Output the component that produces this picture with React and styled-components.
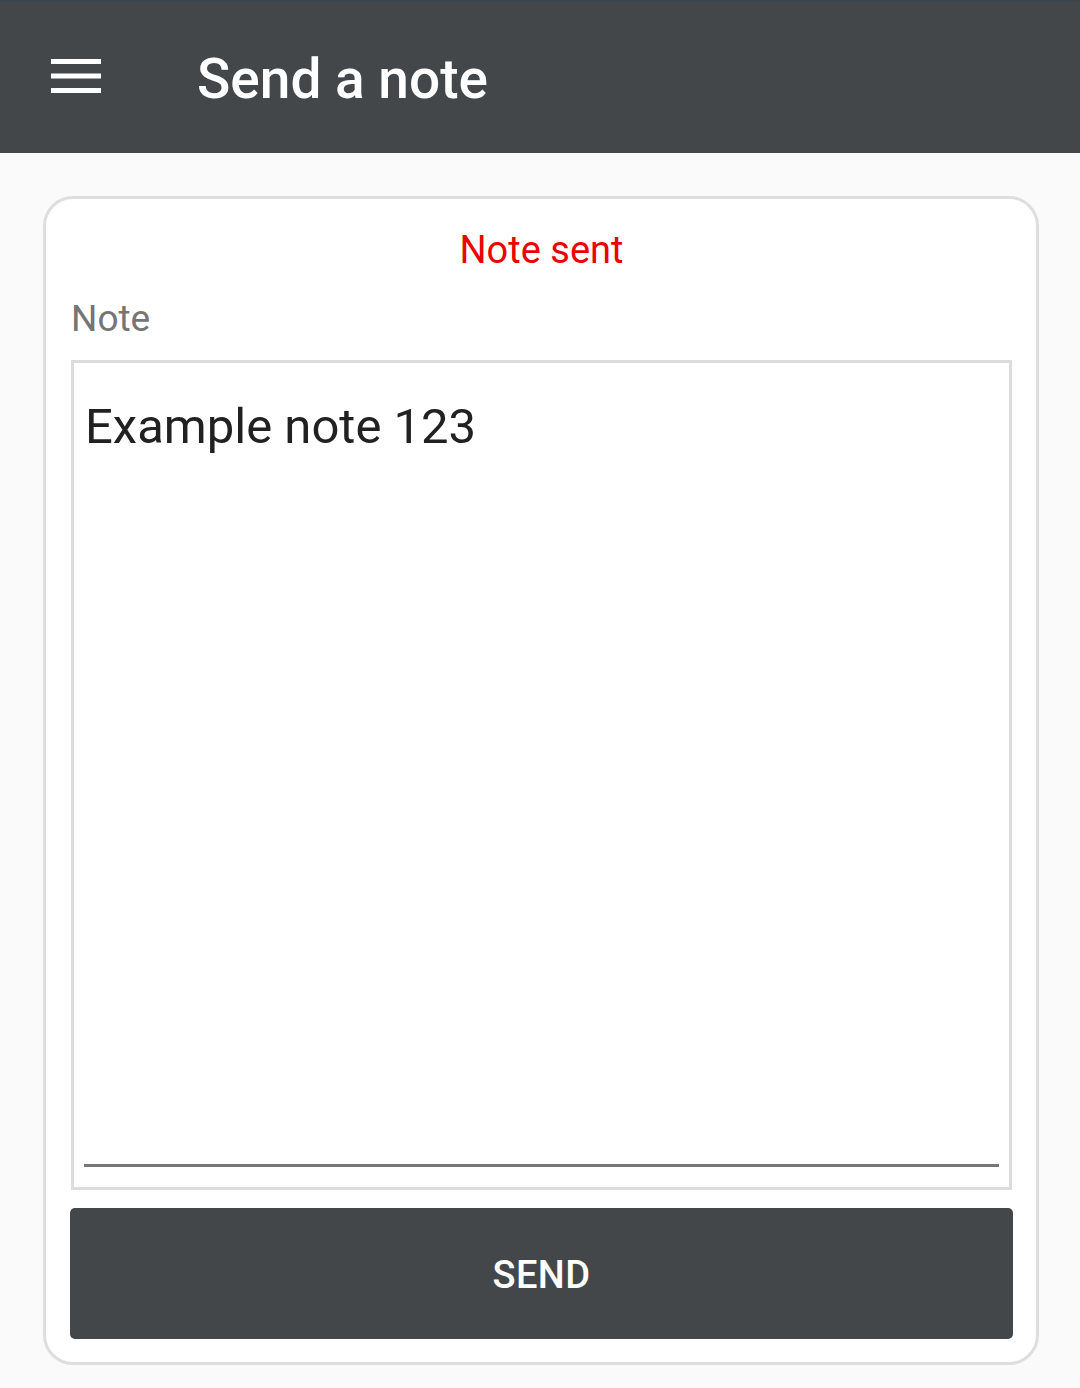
import styled, { createGlobalStyle } from 'styled-components'

const GlobalStyle = createGlobalStyle`
  html, body {
    margin: 0;
    padding: 0;
    background: #fafafa;
    font-family: Roboto, "Liberation Sans", Arial, sans-serif;
  }
  * { box-sizing: border-box; }
`

const TopBar = styled.header`
  height: 153px;
  background: #44474a;
  border-top: 2px solid #3a4550;
  display: flex;
  align-items: center;
  padding-left: 51px;
`

const MenuButton = styled.button`
  width: 50px;
  height: 34px;
  padding: 0;
  border: none;
  background: none;
  margin-top: -4px;
  display: flex;
`

const Title = styled.h1`
  margin: 0 0 0 96px;
  padding-top: 3px;
  color: #ffffff;
  font-size: 55px;
  font-weight: 500;
  line-height: normal;
`

const Main = styled.main`
  padding: 43px 41px 24px 43px;
`

const Card = styled.section`
  background: #ffffff;
  border: 3px solid #dedede;
  border-radius: 30px;
  padding: 29px 24px 23px 25px;
  display: flex;
  flex-direction: column;
`

const Status = styled.div`
  color: #ee0000;
  font-size: 38px;
  text-align: center;
  line-height: normal;
`

const Label = styled.label`
  margin-top: 25px;
  color: #757575;
  font-size: 37px;
  line-height: normal;
`

const Frame = styled.div`
  margin-top: 20px;
  height: 830px;
  border: 3px solid #dcdcdc;
  padding: 35px 10px 20px;
  display: flex;
`

const NoteInput = styled.textarea`
  flex: 1;
  resize: none;
  border: none;
  border-bottom: 3px solid #777777;
  outline: none;
  padding: 0 1px;
  margin: 0;
  font-family: inherit;
  font-size: 49px;
  line-height: normal;
  color: #212121;
  background: transparent;
`

const SendButton = styled.button`
  margin: 18px -1px 0;
  height: 131px;
  border: none;
  border-radius: 5px;
  background: #44474a;
  color: #ffffff;
  font-family: inherit;
  font-size: 38px;
  font-weight: 500;
  letter-spacing: 0.5px;
  text-transform: uppercase;
  padding-top: 4px;
`

function MenuIcon() {
  return (
    <svg width="50" height="34" viewBox="0 0 50 34">
      <rect x="0" y="0" width="50" height="5" fill="#ffffff" />
      <rect x="0" y="14.5" width="50" height="5" fill="#ffffff" />
      <rect x="0" y="29" width="50" height="5" fill="#ffffff" />
    </svg>
  )
}

export default function App() {
  return (
    <>
      <GlobalStyle />
      <TopBar>
        <MenuButton aria-label="Menu">
          <MenuIcon />
        </MenuButton>
        <Title>Send a note</Title>
      </TopBar>
      <Main>
        <Card>
          <Status>Note sent</Status>
          <Label htmlFor="note">Note</Label>
          <Frame>
            <NoteInput id="note" defaultValue="Example note 123" />
          </Frame>
          <SendButton>Send</SendButton>
        </Card>
      </Main>
    </>
  )
}
